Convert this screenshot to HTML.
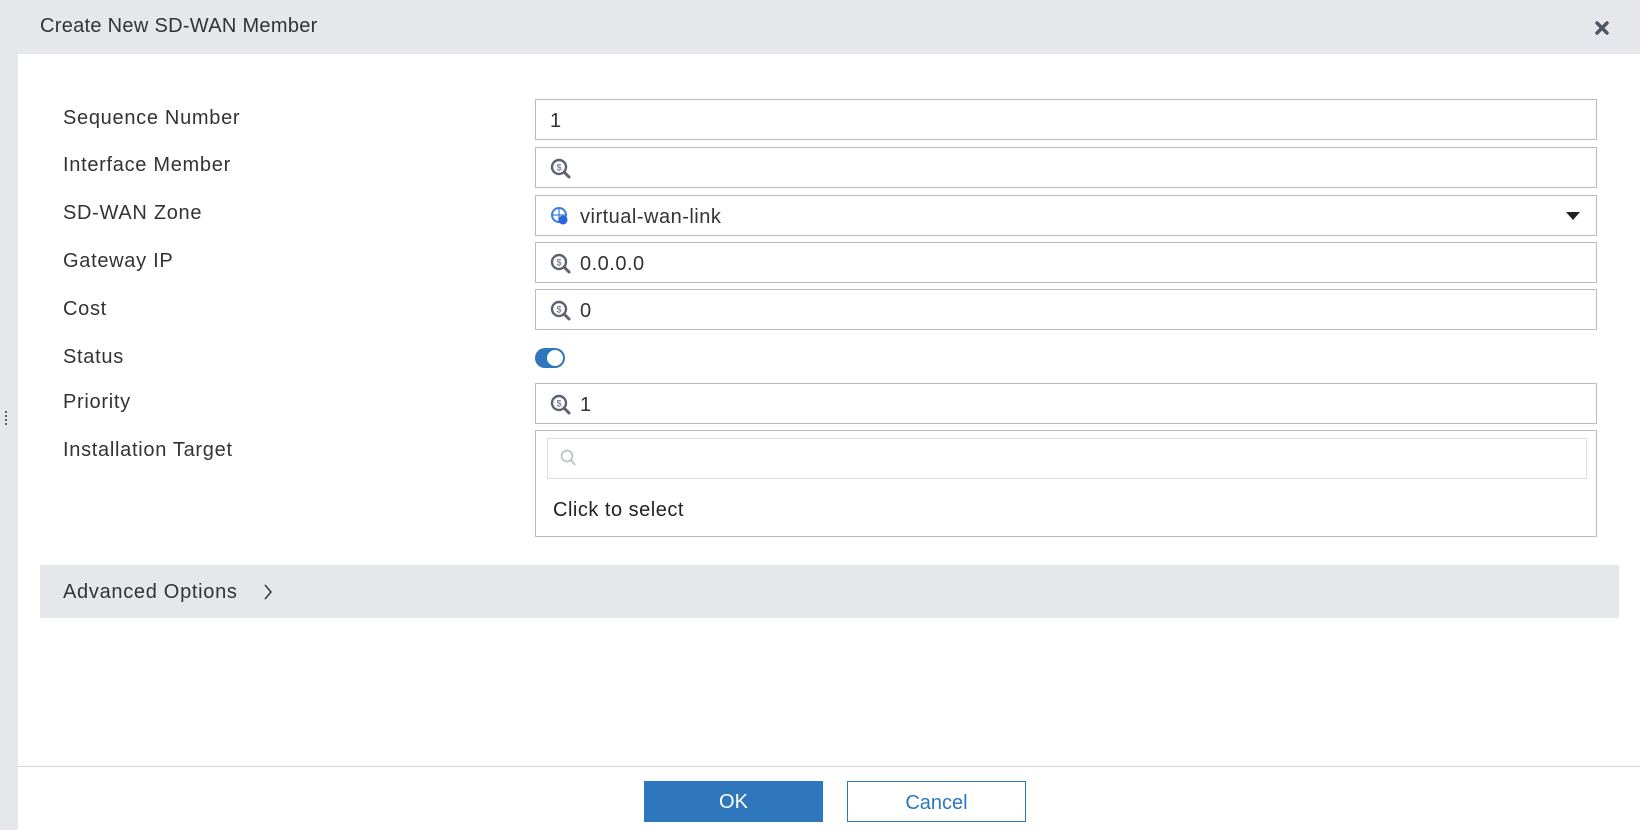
<!DOCTYPE html>
<html><head><style>
*{box-sizing:border-box;margin:0;padding:0}
body{width:1640px;height:830px;background:#fff;font-family:"Liberation Sans",sans-serif;color:#222;position:relative;overflow:hidden}
.strip{position:absolute;left:0;top:0;width:18px;height:830px;background:#e5e7eb}
.head{position:absolute;left:0;top:0;width:1640px;height:54px;background:#e5e7eb}
.title{position:absolute;left:40px;top:15px;font-size:20px;color:#333;letter-spacing:0.3px}
.lbl{position:absolute;left:63px;font-size:20px;color:#333;letter-spacing:0.7px}
.inp{position:absolute;left:535px;width:1062px;height:41px;border:1px solid #b8bcc2;background:#fff}
.val{position:absolute;top:10px;font-size:20px;color:#333;letter-spacing:0.5px}
.ic{position:absolute;left:14px;top:10px}
.adv{position:absolute;left:40px;top:565px;width:1579px;height:53px;background:#e5e7eb}
.btn{position:absolute;top:781px;width:179px;height:41px;font-size:20px;text-align:center;line-height:42px}
</style></head><body>
<div class="strip"></div>
<div class="head"><div class="title">Create New SD-WAN Member</div>
<svg style="position:absolute;left:1594px;top:20px" width="16" height="16" viewBox="0 0 16 16"><path d="M3 3L13 13M13 3L3 13" stroke="#4b5563" stroke-width="3.5" stroke-linecap="round"/></svg></div>
<div style="position:absolute;left:4px;top:410px;width:4px;height:16px;background:radial-gradient(circle,#555 1px,transparent 1.2px) 0 0/4px 4px"></div>

<div class="lbl" style="top:107px">Sequence Number</div>
<div class="inp" style="top:99px"><div class="val" style="left:14px">1</div></div>

<div class="lbl" style="top:154px">Interface Member</div>
<div class="inp" style="top:147px"><svg class="ic" width="22" height="22" viewBox="0 0 22 22"><circle cx="9" cy="9" r="7" fill="none" stroke="#5b6270" stroke-width="2.4"/><path d="M14 14L19 19" stroke="#5b6270" stroke-width="3" stroke-linecap="round"/><text x="9" y="12.5" font-size="9" text-anchor="middle" fill="#5b6270" font-family="Liberation Sans">$</text></svg></div>

<div class="lbl" style="top:202px">SD-WAN Zone</div>
<div class="inp" style="top:195px"><svg class="ic" width="20" height="20" viewBox="0 0 20 20"><circle cx="9" cy="9" r="7" fill="none" stroke="#3b7be0" stroke-width="2"/><path d="M3 9h12M9 2v14" stroke="#3b7be0" stroke-width="1.2"/><circle cx="13" cy="14" r="4.5" fill="#2b63d9"/></svg><div class="val" style="left:44px">virtual-wan-link</div>
<svg style="position:absolute;left:1030px;top:16px" width="14" height="9"><path d="M0 0H14L7 8Z" fill="#222"/></svg></div>

<div class="lbl" style="top:250px">Gateway IP</div>
<div class="inp" style="top:242px"><svg class="ic" width="22" height="22" viewBox="0 0 22 22"><circle cx="9" cy="9" r="7" fill="none" stroke="#5b6270" stroke-width="2.4"/><path d="M14 14L19 19" stroke="#5b6270" stroke-width="3" stroke-linecap="round"/><text x="9" y="12.5" font-size="9" text-anchor="middle" fill="#5b6270" font-family="Liberation Sans">$</text></svg><div class="val" style="left:44px">0.0.0.0</div></div>

<div class="lbl" style="top:298px">Cost</div>
<div class="inp" style="top:289px"><svg class="ic" width="22" height="22" viewBox="0 0 22 22"><circle cx="9" cy="9" r="7" fill="none" stroke="#5b6270" stroke-width="2.4"/><path d="M14 14L19 19" stroke="#5b6270" stroke-width="3" stroke-linecap="round"/><text x="9" y="12.5" font-size="9" text-anchor="middle" fill="#5b6270" font-family="Liberation Sans">$</text></svg><div class="val" style="left:44px">0</div></div>

<div class="lbl" style="top:346px">Status</div>
<div style="position:absolute;left:535px;top:348px;width:30px;height:20px;border-radius:10px;background:#2e77bc"><div style="position:absolute;right:2px;top:2px;width:16px;height:16px;border-radius:8px;background:#fff"></div></div>

<div class="lbl" style="top:391px">Priority</div>
<div class="inp" style="top:383px"><svg class="ic" width="22" height="22" viewBox="0 0 22 22"><circle cx="9" cy="9" r="7" fill="none" stroke="#5b6270" stroke-width="2.4"/><path d="M14 14L19 19" stroke="#5b6270" stroke-width="3" stroke-linecap="round"/><text x="9" y="12.5" font-size="9" text-anchor="middle" fill="#5b6270" font-family="Liberation Sans">$</text></svg><div class="val" style="left:44px">1</div></div>

<div class="lbl" style="top:439px">Installation Target</div>
<div class="inp" style="top:430px;height:107px">
<div style="position:absolute;left:11px;top:7px;width:1040px;height:41px;border:1px solid #dcdde0"><svg style="position:absolute;left:12px;top:10px" width="18" height="20" viewBox="0 0 18 20"><circle cx="7" cy="7" r="5.5" fill="none" stroke="#b5b8be" stroke-width="1.5"/><path d="M11 11L15 16" stroke="#b5b8be" stroke-width="1.5"/></svg></div>
<div class="val" style="left:17px;top:68px;color:#222">Click to select</div></div>

<div class="adv"><div style="position:absolute;left:23px;top:16px;font-size:20px;color:#333;letter-spacing:0.7px">Advanced Options</div>
<svg style="position:absolute;left:223px;top:19px" width="10" height="16"><path d="M2 1L8 8L2 15" fill="none" stroke="#333" stroke-width="1.5"/></svg></div>

<div style="position:absolute;left:18px;top:766px;width:1622px;height:1px;background:#d4d6da"></div>
<div class="btn" style="left:644px;background:#2e77bc;color:#fff">OK</div>
<div class="btn" style="left:847px;border:1px solid #2e77bc;color:#2e77bc">Cancel</div>
</body></html>
